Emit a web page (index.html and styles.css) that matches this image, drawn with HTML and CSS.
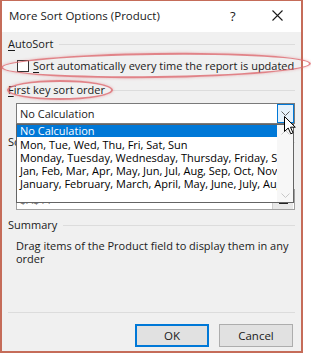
FILE: index.html
```html
<!DOCTYPE html>
<html lang="en">
<head>
    <meta charset="UTF-8">
    <meta name="viewport" content="width=device-width, initial-scale=1.0">
    <title>More Sort Options (Product)</title>
    <link rel="stylesheet" href="styles.css">
</head>
<body>
    <div class="dialog">
        <div class="titlebar">
            <span class="title">More Sort Options (Product)</span>
            <span class="help">?</span>
            <svg class="close" width="11" height="11" viewBox="0 0 11 11">
                <path d="M0.5 0.5 L10.5 10.5 M10.5 0.5 L0.5 10.5" stroke="#1a1a1a" stroke-width="1.1" fill="none"/>
            </svg>
        </div>

        <div class="content">
            <div class="group-head"><span><u>A</u>utoSort</span></div>
            <div class="check-row">
                <span class="checkbox"></span>
                <span><u>S</u>ort automatically every time the report is updated</span>
            </div>

            <div class="group-head"><span><u>F</u>irst key sort order</span></div>
            <div class="combo-wrap">
                <div class="combo">
                    <span class="combo-text">No Calculation</span>
                    <span class="combo-btn">
                        <svg width="9" height="5" viewBox="0 0 9 5"><path d="M0.5 0.5 L4.5 4.5 L8.5 0.5" stroke="#606060" fill="none"/></svg>
                    </span>
                </div>
                <div class="dropdown">
                    <ul class="options">
                        <li class="selected">No Calculation</li>
                        <li>Mon, Tue, Wed, Thu, Fri, Sat, Sun</li>
                        <li>Monday, Tuesday, Wednesday, Thursday, Friday, Saturday, Sunday</li>
                        <li>Jan, Feb, Mar, Apr, May, Jun, Jul, Aug, Sep, Oct, Nov, Dec</li>
                        <li>January, February, March, April, May, June, July, August, September, October, November, December</li>
                    </ul>
                    <div class="scrollbar">
                        <svg width="9" height="5" viewBox="0 0 9 5"><path d="M0.5 4.5 L4.5 0.5 L8.5 4.5" stroke="#c8c8c8" fill="none"/></svg>
                        <svg width="9" height="5" viewBox="0 0 9 5"><path d="M0.5 0.5 L4.5 4.5 L8.5 0.5" stroke="#c8c8c8" fill="none"/></svg>
                    </div>
                </div>
                <svg class="cursor" width="12" height="19" viewBox="0 0 12 19">
                    <path d="M0.5 0.5 L0.5 15.5 L4.2 12 L6.8 17.8 L9 16.8 L6.5 11.2 L11.3 11.2 Z" fill="#fff" stroke="#000" stroke-width="1" stroke-linejoin="round"/>
                </svg>
            </div>

            <div class="group-head sort-by"><span>Sort by</span></div>
            <div class="refedit">
                <span class="ref-text">$A$11</span>
                <span class="ref-btn"><span class="ref-icon"></span></span>
            </div>

            <div class="group-head summary-head"><span>Summary</span></div>
            <p class="summary">Drag items of the Product field to display them in any order</p>

            <div class="footer">
                <button class="btn btn-default">OK</button>
                <button class="btn">Cancel</button>
            </div>
        </div>

        <div class="mark mark-auto"></div>
        <div class="mark mark-key"></div>
    </div>
</body>
</html>
```

FILE: styles.css
```css
:root {
    --frame: #c56c59;
    --face: #f0f0f0;
    --text: #1a1a1a;
    --rule: #dcdcdc;
    --accent: #0078d7;
    --mark: rgba(221, 104, 110, 0.8);
}

* {
    box-sizing: border-box;
    margin: 0;
    padding: 0;
}

body {
    margin: 0;
    background-color: #fff;
    font-family: "Open Sans", "Noto Sans", sans-serif;
    font-size: 11px;
    color: var(--text);
}

u {
    text-decoration-thickness: 1px;
    text-underline-offset: 2px;
}

.dialog {
    position: relative;
    width: 303px;
    height: 353px;
    border: 2px solid var(--frame);
    border-top-width: 1px;
}

.titlebar {
    display: flex;
    align-items: center;
    height: 31px;
    padding: 0 0 0 7px;
    background-color: #fff;
    font-size: 11.5px;
}

.title {
    flex: 1;
    padding-bottom: 2px;
}

.help {
    width: 42px;
    font-size: 13px;
    padding-bottom: 2px;
}

.close {
    margin-right: 18px;
    margin-bottom: 2px;
}

.content {
    height: 319px;
    padding: 4px 6px 0 6px;
    background-color: var(--face);
    line-height: 16px;
}

.group-head {
    display: flex;
    align-items: center;
    gap: 6px;
    height: 16px;
    white-space: nowrap;
}

.group-head::after {
    content: "";
    flex: 1;
    height: 1px;
    background-color: var(--rule);
}

.check-row {
    display: flex;
    align-items: center;
    gap: 4px;
    height: 16px;
    margin: 6px 0 8px 9px;
    white-space: nowrap;
}

.checkbox {
    flex: none;
    width: 12px;
    height: 12px;
    border: 1px solid #333;
    background-color: #fff;
}

.combo-wrap {
    position: relative;
    width: 279px;
    margin: 5px 0 0 8px;
}

.combo {
    display: flex;
    align-items: center;
    height: 21px;
    border: 1px solid #7a7a7a;
    background-color: #fff;
}

.combo-text {
    flex: 1;
    padding-left: 3px;
}

.combo-btn {
    display: flex;
    align-items: center;
    justify-content: center;
    width: 17px;
    height: 19px;
    border: 1px solid var(--accent);
    background-color: #e5f1fb;
}

.dropdown {
    position: absolute;
    top: 21px;
    left: 0;
    z-index: 10;
    display: flex;
    width: 278px;
    height: 79px;
    border: 1px solid #646464;
    background-color: #fff;
}

.options {
    flex: 1;
    min-width: 0;
    list-style: none;
    overflow: hidden;
}

.options li {
    height: 13px;
    line-height: 13px;
    padding-left: 3px;
    white-space: nowrap;
    color: #000;
}

.options li.selected {
    background-color: var(--accent);
    color: #fff;
    height: 12px;
    line-height: 12px;
    margin-bottom: 1px;
}

.scrollbar {
    display: flex;
    flex-direction: column;
    justify-content: space-between;
    align-items: center;
    width: 16px;
    padding: 5px 0 4px;
    background-color: #f7f7f7;
}

.cursor {
    position: absolute;
    top: 13px;
    left: 268px;
    z-index: 20;
}

.sort-by {
    margin-top: 10px;
}

.refedit {
    display: flex;
    align-items: center;
    width: 279px;
    height: 21px;
    margin: 39px 0 0 8px;
    border: 1px solid #a0a0a0;
    background-color: #fff;
}

.ref-text {
    flex: 1;
    padding-left: 3px;
    color: #7a7a7a;
}

.ref-btn {
    display: flex;
    justify-content: center;
    width: 21px;
    height: 19px;
    margin-right: 1px;
    padding-top: 12px;
    border-left: 1px solid #cfcfcf;
    background-color: #e8e8e8;
}

.ref-icon {
    width: 9px;
    height: 2px;
    background-color: #222;
}

.summary-head {
    margin-top: 7px;
}

.summary {
    margin: 6px 0 0 8px;
    line-height: 13px;
    width: 285px;
}

.footer {
    display: flex;
    justify-content: flex-end;
    gap: 10px;
    margin-top: 47px;
    padding: 11px 2px 0 0;
    border-top: 1px solid var(--rule);
}

.btn {
    width: 74px;
    height: 23px;
    border: 1px solid #adadad;
    background-color: #e1e1e1;
    font-family: inherit;
    font-size: 11.5px;
    color: var(--text);
}

.btn-default {
    border: 2px solid var(--accent);
}

.mark {
    position: absolute;
    border: 2px solid var(--mark);
    border-radius: 50%;
    box-shadow: 0 0 3px rgba(221, 104, 110, 0.45);
    z-index: 30;
}

.mark-auto {
    top: 52px;
    left: -1px;
    width: 310px;
    height: 25px;
    transform: rotate(-0.7deg);
}

.mark-key {
    top: 79px;
    left: 5px;
    width: 106px;
    height: 20px;
}
```
